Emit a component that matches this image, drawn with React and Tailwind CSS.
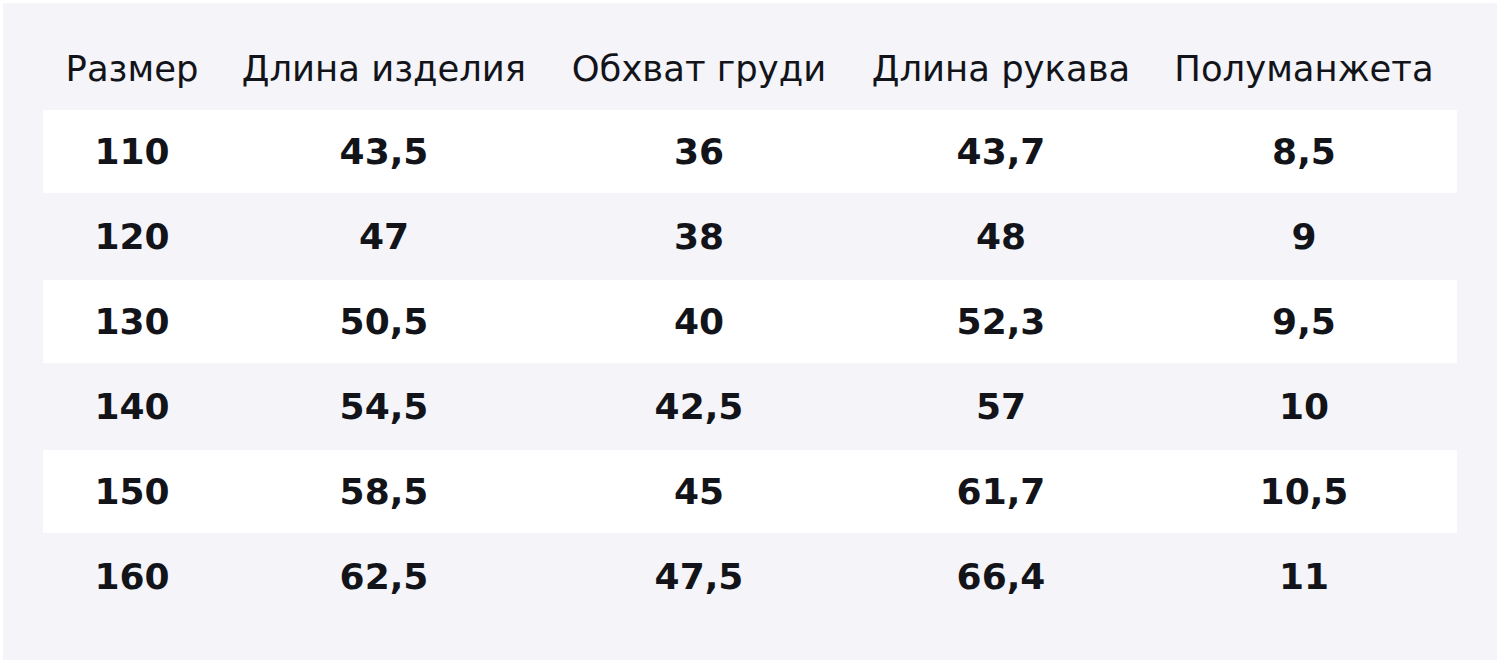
import React from "react";

const headers = ["Размер", "Длина изделия", "Обхват груди", "Длина рукава", "Полуманжета"];

const rows = [
  ["110", "43,5", "36", "43,7", "8,5"],
  ["120", "47", "38", "48", "9"],
  ["130", "50,5", "40", "52,3", "9,5"],
  ["140", "54,5", "42,5", "57", "10"],
  ["150", "58,5", "45", "61,7", "10,5"],
  ["160", "62,5", "47,5", "66,4", "11"],
];

const colWidths = ["w-[178px]", "w-[326px]", "w-[304px]", "w-[300px]", "w-[306px]"];

const App = () => {
  return (
    <div className="bg-white p-[3px] min-h-screen" style={{ fontFamily: '"DejaVu Sans", sans-serif' }}>
      <div className="bg-[#f4f4f9] px-10 pt-10 pb-10 text-[#131419]">
        <table className="w-full table-fixed border-collapse">
          <colgroup>
            {colWidths.map((w) => (
              <col key={w} className={w} />
            ))}
          </colgroup>
          <thead>
            <tr className="h-[67px]">
              {headers.map((h) => (
                <th
                  key={h}
                  className="text-[35.4px] leading-[42px] font-normal text-center align-top pt-[5px] pb-[20px] whitespace-nowrap"
                >
                  {h}
                </th>
              ))}
            </tr>
          </thead>
          <tbody>
            {rows.map((row, i) => (
              <tr
                key={row[0]}
                className={i % 2 === 0 ? "bg-white h-[83px]" : "h-[87px]"}
              >
                {row.map((cell, j) => (
                  <td key={j} className="text-[36px] leading-[42px] font-bold text-center align-middle p-0">
                    {cell}
                  </td>
                ))}
              </tr>
            ))}
          </tbody>
        </table>
      </div>
    </div>
  );
};

export default App;
